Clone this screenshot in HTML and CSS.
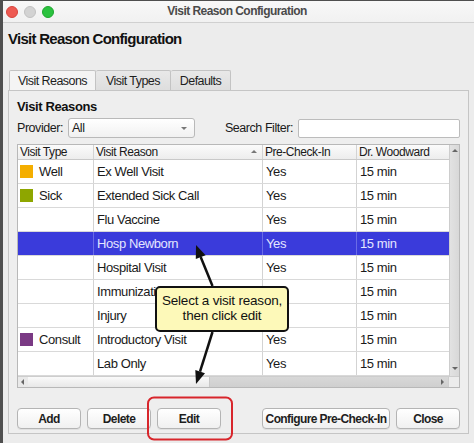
FILE: index.html
```html
<!DOCTYPE html>
<html lang="en">
  <head>
    <meta charset="UTF-8" />
    <title>Visit Reason Configuration</title>
    <link rel="stylesheet" href="styles.css">
  </head>
  <body>
    <div class="window">
      <div class="titlebar">
        <div class="lights">
          <span class="light red"></span>
          <span class="light gray"></span>
          <span class="light green"></span>
        </div>
        <div class="title">Visit Reason Configuration</div>
      </div>

      <div class="content">
        <h1>Visit Reason Configuration</h1>

        <div class="tabs">
          <div class="tab active">Visit Reasons</div>
          <div class="tab tab-types">Visit Types</div>
          <div class="tab tab-defaults">Defaults</div>
        </div>

        <div class="panel">
          <h2>Visit Reasons</h2>

          <div class="filters">
            <label>Provider:</label>
            <div class="select">All<span class="caret"></span></div>
            <label class="search-label">Search Filter:</label>
            <div class="search"></div>
          </div>

          <div class="grid">
            <div class="grid-top">
              <div class="grid-main">
                <div class="row head">
                  <div class="cell">Visit Type</div>
                  <div class="cell sort">Visit Reason<span class="sort-arrow"></span></div>
                  <div class="cell">Pre-Check-In</div>
                  <div class="cell">Dr. Woodward</div>
                </div>
                <div class="row">
                  <div class="cell"><span class="swatch well"></span>Well</div>
                  <div class="cell">Ex Well Visit</div>
                  <div class="cell">Yes</div>
                  <div class="cell">15 min</div>
                </div>
                <div class="row">
                  <div class="cell"><span class="swatch sick"></span>Sick</div>
                  <div class="cell">Extended Sick Call</div>
                  <div class="cell">Yes</div>
                  <div class="cell">15 min</div>
                </div>
                <div class="row">
                  <div class="cell"></div>
                  <div class="cell">Flu Vaccine</div>
                  <div class="cell">Yes</div>
                  <div class="cell">15 min</div>
                </div>
                <div class="row selected">
                  <div class="cell"></div>
                  <div class="cell">Hosp Newborn</div>
                  <div class="cell">Yes</div>
                  <div class="cell">15 min</div>
                </div>
                <div class="row">
                  <div class="cell"></div>
                  <div class="cell">Hospital Visit</div>
                  <div class="cell">Yes</div>
                  <div class="cell">15 min</div>
                </div>
                <div class="row">
                  <div class="cell"></div>
                  <div class="cell">Immunization</div>
                  <div class="cell">Yes</div>
                  <div class="cell">15 min</div>
                </div>
                <div class="row">
                  <div class="cell"></div>
                  <div class="cell">Injury</div>
                  <div class="cell">Yes</div>
                  <div class="cell">15 min</div>
                </div>
                <div class="row">
                  <div class="cell"><span class="swatch consult"></span>Consult</div>
                  <div class="cell">Introductory Visit</div>
                  <div class="cell">Yes</div>
                  <div class="cell">15 min</div>
                </div>
                <div class="row">
                  <div class="cell"></div>
                  <div class="cell">Lab Only</div>
                  <div class="cell">Yes</div>
                  <div class="cell">15 min</div>
                </div>
              </div>
              <div class="vscroll">
                <span class="arrow-up"></span>
                <span class="grip-v"></span>
                <span class="arrow-down"></span>
              </div>
            </div>
            <div class="hscroll">
              <span class="arrow-left"></span>
              <div class="hthumb"><span class="grip-h"></span></div>
              <div class="htrack"><span class="arrow-right"></span></div>
              <div class="corner"></div>
            </div>
          </div>

          <div class="buttons">
            <button class="btn">Add</button>
            <button class="btn">Delete</button>
            <button class="btn">Edit</button>
            <div class="spacer"></div>
            <button class="btn wide">Configure Pre-Check-In</button>
            <button class="btn">Close</button>
          </div>
        </div>
      </div>
    </div>

    <!-- annotation overlay -->
    <svg class="marks" width="474" height="443" viewBox="0 0 474 443">
      <line x1="212.5" y1="286" x2="200.7" y2="257" stroke="#111" stroke-width="2.5" />
      <polygon points="196,245 205.6,255.2 195.8,259" fill="#111" />
      <line x1="212.5" y1="332" x2="200" y2="371.6" stroke="#111" stroke-width="2.5" />
      <polygon points="196,384 205,373.3 195.3,370" fill="#111" />
      <rect x="148" y="397.5" width="84" height="42" rx="6" fill="none" stroke="#d8262c" stroke-width="2" />
    </svg>
    <div class="callout">Select a visit reason,<br>then click edit</div>
  </body>
</html>
```

FILE: styles.css
```css
body {
  margin: 0;
  position: relative;
  width: 474px;
  height: 443px;
  overflow: hidden;
  background: #ececec;
  font-family: "Liberation Sans", Arial, sans-serif;
  color: #1a1a1a;
}
.window {
  height: 442px;
  border-top: 1px solid #4f4f4f;
  border-left: 3px solid #4f4f4f;
  background: #ececec;
}
.titlebar {
  position: relative;
  height: 21px;
  border-bottom: 1px solid #d0d0d0;
  background: linear-gradient(#f8f8f8, #f1f1f1);
}
.lights {
  position: absolute;
  left: 3px;
  top: 5px;
  display: flex;
  gap: 6px;
}
.light {
  width: 10px;
  height: 10px;
  border-radius: 50%;
}
.light.red {
  background: #ee5a52;
  border: 0.5px solid #d8443d;
}
.light.gray {
  background: #d3d3d3;
  border: 0.5px solid #c2c2c2;
}
.light.green {
  background: #2bc23f;
  border: 0.5px solid #1fa72f;
}
.title {
  text-align: center;
  font-size: 12px;
  font-weight: bold;
  letter-spacing: -0.55px;
  line-height: 21px;
  color: #4a4a4a;
  padding-right: 3px;
}
.content {
  padding: 0 5px;
}
h1 {
  margin: 7px 0 0 0;
  font-size: 15px;
  line-height: 18px;
  letter-spacing: -0.72px;
  font-weight: bold;
  color: #111;
}
.tabs {
  display: flex;
  margin: 22px 0 0 1px;
  height: 20px;
}
.tab {
  width: 87px;
  height: 20px;
  box-sizing: border-box;
  border: 1px solid #c3c3c3;
  border-bottom: none;
  border-radius: 2px 2px 0 0;
  background: linear-gradient(#e8e8e8, #dedede);
  font-size: 12.5px;
  letter-spacing: -0.55px;
  line-height: 20px;
  text-align: center;
  color: #1e1e1e;
}
.tab.active {
  background: #f4f4f4;
}
.tab-types {
  width: 75px;
  border-left: none;
}
.tab-defaults {
  width: 60px;
  border-left: none;
}
.panel {
  height: 344px;
  box-sizing: border-box;
  border: 1px solid #c5c5c5;
  background: #eeeeee;
  padding: 8px 8px 6px 8px;
}
h2 {
  margin: 0;
  font-size: 13px;
  line-height: 16px;
  letter-spacing: -0.4px;
  font-weight: bold;
  color: #111;
}
.filters {
  display: flex;
  align-items: center;
  margin-top: 3px;
  height: 20px;
  font-size: 12.5px;
  letter-spacing: -0.45px;
}
.select {
  position: relative;
  width: 127px;
  height: 20px;
  margin-left: 5px;
  box-sizing: border-box;
  border: 1px solid #b9b9b9;
  border-radius: 3px;
  background: linear-gradient(#ffffff, #f1f1f1);
  padding-left: 3px;
  line-height: 18px;
}
.caret {
  position: absolute;
  right: 7px;
  top: 8px;
  border-left: 3px solid transparent;
  border-right: 3px solid transparent;
  border-top: 3px solid #777;
}
.search-label {
  margin-left: auto;
}
.search {
  width: 162px;
  height: 19px;
  margin-left: 5px;
  box-sizing: border-box;
  border: 1px solid #bcbcbc;
  border-radius: 2px;
  background: #fff;
}
.grid {
  margin-top: 6px;
  border: 1px solid #b8b8b8;
  background: #fff;
}
.grid-top {
  display: flex;
}
.grid-main {
  width: 431px;
}
.row {
  display: grid;
  grid-template-columns: 76px 169px 94px 92px;
  height: 24px;
  box-sizing: border-box;
  border-bottom: 1px solid #d9d9d9;
  font-size: 13px;
  letter-spacing: -0.4px;
  color: #1a1a1a;
}
.row.head {
  height: 15px;
  border-bottom: 1px solid #c9c9c9;
  background: linear-gradient(#fbfbfb, #ededed);
  font-size: 12px;
  letter-spacing: -0.45px;
}
.cell {
  display: flex;
  align-items: center;
  padding-left: 3px;
  border-right: 1px solid #d3d3d3;
  white-space: nowrap;
  overflow: hidden;
}
.row .cell:last-child {
  border-right: none;
}
.head .cell {
  padding-left: 2px;
}
.sort {
  position: relative;
}
.sort-arrow {
  position: absolute;
  right: 5px;
  top: 5px;
  border-left: 3px solid transparent;
  border-right: 3px solid transparent;
  border-bottom: 3px solid #777;
}
.row.selected {
  background: #3a3bdb;
  color: #e4e6ff;
}
.row.selected .cell {
  border-right-color: #6a6ce6;
}
.swatch {
  width: 13px;
  height: 13px;
  margin: 0 6px 0 -1px;
  flex: none;
}
.swatch.well {
  background: #f4ae00;
}
.swatch.sick {
  background: #8ea600;
}
.swatch.consult {
  background: #7a3a84;
}
.vscroll {
  position: relative;
  width: 10px;
  box-sizing: border-box;
  border-left: 1px solid #cdcdcd;
  background: linear-gradient(90deg, #e2e2e2, #d8d8d8);
}
.arrow-up {
  position: absolute;
  left: 2px;
  top: 4px;
  border-left: 3px solid transparent;
  border-right: 3px solid transparent;
  border-bottom: 3px solid #666;
}
.arrow-down {
  position: absolute;
  left: 2px;
  bottom: 6px;
  border-left: 3px solid transparent;
  border-right: 3px solid transparent;
  border-top: 3px solid #666;
}
.grip-v {
  position: absolute;
  left: 1px;
  top: 158px;
  width: 7px;
  height: 19px;
  background: radial-gradient(circle, #f8f8f8 40%, transparent 45%) 0 0 / 2px 2px;
}
.hscroll {
  display: flex;
  height: 10px;
  border-top: 1px solid #cdcdcd;
  background: #d6d6d6;
}
.arrow-left {
  width: 10px;
  position: relative;
  background: #e9e9e9;
}
.arrow-left::after {
  content: "";
  position: absolute;
  left: 3px;
  top: 2px;
  border-top: 3px solid transparent;
  border-bottom: 3px solid transparent;
  border-right: 3px solid #666;
}
.hthumb {
  position: relative;
  width: 181px;
  background: linear-gradient(#fafafa, #e8e8e8);
  border-right: 1px solid #c8c8c8;
}
.grip-h {
  position: absolute;
  left: 83px;
  top: 1px;
  width: 16px;
  height: 7px;
  background: radial-gradient(circle, #b5b5b5 40%, transparent 45%) 0 0 / 2px 2px;
}
.htrack {
  position: relative;
  flex: 1;
  background: linear-gradient(#d8d8d8, #cfcfcf);
}
.arrow-right {
  position: absolute;
  right: 4px;
  top: 2px;
  border-top: 3px solid transparent;
  border-bottom: 3px solid transparent;
  border-left: 3px solid #666;
}
.corner {
  width: 10px;
  border-left: 1px solid #cdcdcd;
  background: #ececec;
}
.buttons {
  display: flex;
  margin-top: 20px;
  gap: 6px;
}
.spacer {
  flex: 1;
}
.btn {
  width: 64px;
  height: 21px;
  padding: 0;
  border: 1px solid #b4b4b4;
  border-radius: 4px;
  background: linear-gradient(#ffffff, #f0f0f0);
  box-shadow: 0 1px 0 rgba(0, 0, 0, 0.06);
  font-family: "Liberation Sans", Arial, sans-serif;
  font-size: 12px;
  font-weight: bold;
  letter-spacing: -0.6px;
  white-space: nowrap;
  color: #1e1e1e;
}
.btn.wide {
  width: 128px;
}
.marks {
  position: absolute;
  left: 0;
  top: 0;
  pointer-events: none;
}
.callout {
  position: absolute;
  left: 155px;
  top: 286px;
  width: 134px;
  height: 46px;
  box-sizing: border-box;
  border: 2.5px solid #111;
  border-radius: 5px;
  background: #fdf9b9;
  padding-top: 5px;
  text-align: center;
  font-size: 13.5px;
  line-height: 15px;
  letter-spacing: -0.2px;
  color: #111;
}
```
